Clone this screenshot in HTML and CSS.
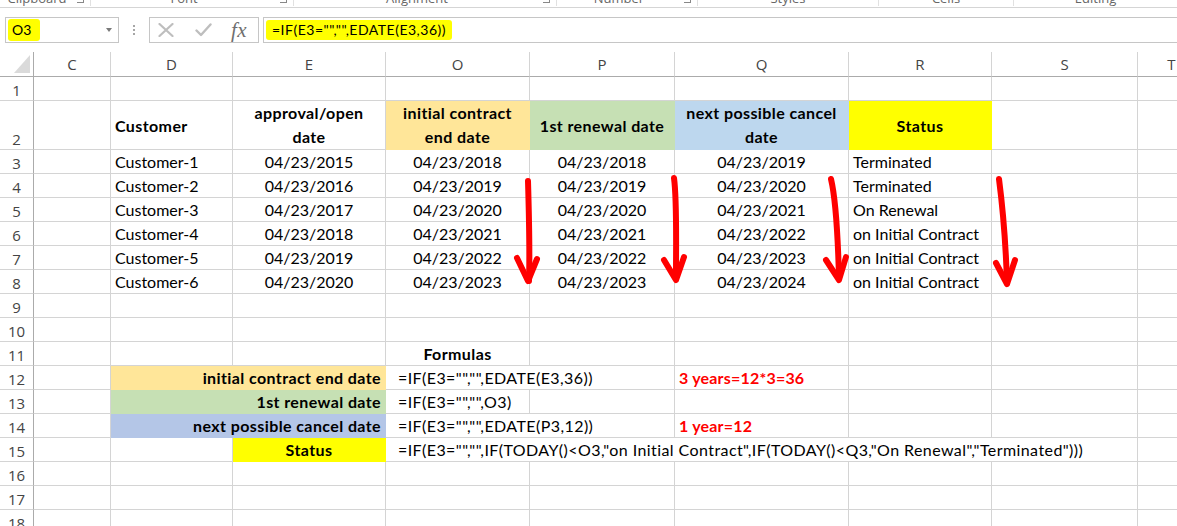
FILE: index.html
```html
<!DOCTYPE html>
<html>
<head>
<meta charset="utf-8">
<title>Excel sheet</title>
<link rel="stylesheet" href="styles.css">
</head>
<body>
<div class="app">
  <div class="ribbon">
    <div class="grp g1"><span class="lbl">Clipboard</span><span class="launch"></span></div>
    <div class="grp g2"><span class="lbl">Font</span><span class="launch"></span></div>
    <div class="grp g3"><span class="lbl">Alignment</span><span class="launch"></span></div>
    <div class="grp g4"><span class="lbl">Number</span><span class="launch"></span></div>
    <div class="grp g5 nol"><span class="lbl">Styles</span></div>
    <div class="grp g6 nol"><span class="lbl">Cells</span></div>
    <div class="grp g7 nol"><span class="lbl">Editing</span></div>
  </div>

  <div class="fbar">
    <div class="namebox"><span class="hl hl-name">O3</span><span class="caret"></span></div>
    <div class="dots"><i></i><i></i><i></i></div>
    <div class="fxbox">
      <svg class="ic-x" width="16" height="14" viewBox="0 0 16 14"><path d="M1.5 1 L14.5 13 M14.5 1 L1.5 13" stroke="#BEBEBE" stroke-width="2.2" fill="none" stroke-linecap="round"/></svg>
      <svg class="ic-ck" width="17" height="14" viewBox="0 0 17 14"><path d="M1.5 7.5 L6 12 L15.5 1.5" stroke="#BEBEBE" stroke-width="2.4" fill="none" stroke-linecap="round" stroke-linejoin="round"/></svg>
      <span class="fx">fx</span>
    </div>
    <div class="formula"><span class="hl hl-formula">=IF(E3="","",EDATE(E3,36))</span></div>
  </div>

  <div class="sheet">
    <!-- header -->
    <div class="c corner"><span class="tri"></span></div>
    <div class="c ch">C</div><div class="c ch">D</div><div class="c ch">E</div><div class="c ch">O</div><div class="c ch">P</div><div class="c ch">Q</div><div class="c ch">R</div><div class="c ch">S</div><div class="c ch">T</div>

    <!-- row 1 -->
    <div class="c rh">1</div>
    <div class="c"></div><div class="c"></div><div class="c"></div><div class="c"></div><div class="c"></div><div class="c"></div><div class="c"></div><div class="c"></div><div class="c"></div>

    <!-- row 2 -->
    <div class="c rh">2</div>
    <div class="c"></div>
    <div class="c b">Customer</div>
    <div class="c b ctr wrap">approval/open<br>date</div>
    <div class="c b ctr wrap f-or">initial contract<br>end date</div>
    <div class="c b ctr f-gr">1st renewal date</div>
    <div class="c b ctr wrap f-bl">next possible cancel<br>date</div>
    <div class="c b ctr f-ye">Status</div>
    <div class="c"></div><div class="c"></div>

    <!-- row 3 -->
    <div class="c rh">3</div>
    <div class="c"></div>
    <div class="c">Customer-1</div>
    <div class="c ctr">04/23/2015</div>
    <div class="c ctr">04/23/2018</div>
    <div class="c ctr">04/23/2018</div>
    <div class="c ctr">04/23/2019</div>
    <div class="c">Terminated</div>
    <div class="c"></div><div class="c"></div>

    <!-- row 4 -->
    <div class="c rh">4</div>
    <div class="c"></div>
    <div class="c">Customer-2</div>
    <div class="c ctr">04/23/2016</div>
    <div class="c ctr">04/23/2019</div>
    <div class="c ctr">04/23/2019</div>
    <div class="c ctr">04/23/2020</div>
    <div class="c">Terminated</div>
    <div class="c"></div><div class="c"></div>

    <!-- row 5 -->
    <div class="c rh">5</div>
    <div class="c"></div>
    <div class="c">Customer-3</div>
    <div class="c ctr">04/23/2017</div>
    <div class="c ctr">04/23/2020</div>
    <div class="c ctr">04/23/2020</div>
    <div class="c ctr">04/23/2021</div>
    <div class="c">On Renewal</div>
    <div class="c"></div><div class="c"></div>

    <!-- row 6 -->
    <div class="c rh">6</div>
    <div class="c"></div>
    <div class="c">Customer-4</div>
    <div class="c ctr">04/23/2018</div>
    <div class="c ctr">04/23/2021</div>
    <div class="c ctr">04/23/2021</div>
    <div class="c ctr">04/23/2022</div>
    <div class="c">on Initial Contract</div>
    <div class="c"></div><div class="c"></div>

    <!-- row 7 -->
    <div class="c rh">7</div>
    <div class="c"></div>
    <div class="c">Customer-5</div>
    <div class="c ctr">04/23/2019</div>
    <div class="c ctr">04/23/2022</div>
    <div class="c ctr">04/23/2022</div>
    <div class="c ctr">04/23/2023</div>
    <div class="c">on Initial Contract</div>
    <div class="c"></div><div class="c"></div>

    <!-- row 8 -->
    <div class="c rh">8</div>
    <div class="c"></div>
    <div class="c">Customer-6</div>
    <div class="c ctr">04/23/2020</div>
    <div class="c ctr">04/23/2023</div>
    <div class="c ctr">04/23/2023</div>
    <div class="c ctr">04/23/2024</div>
    <div class="c">on Initial Contract</div>
    <div class="c"></div><div class="c"></div>

    <!-- row 9 -->
    <div class="c rh">9</div>
    <div class="c"></div><div class="c"></div><div class="c"></div><div class="c"></div><div class="c"></div><div class="c"></div><div class="c"></div><div class="c"></div><div class="c"></div>

    <!-- row 10 -->
    <div class="c rh">10</div>
    <div class="c"></div><div class="c"></div><div class="c"></div><div class="c"></div><div class="c"></div><div class="c"></div><div class="c"></div><div class="c"></div><div class="c"></div>

    <!-- row 11 -->
    <div class="c rh">11</div>
    <div class="c"></div><div class="c"></div><div class="c"></div>
    <div class="c b ctr">Formulas</div>
    <div class="c"></div><div class="c"></div><div class="c"></div><div class="c"></div><div class="c"></div>

    <!-- row 12 -->
    <div class="c rh">12</div>
    <div class="c"></div>
    <div class="c b rt s2 f-or">initial contract end date</div>
    <div class="c fm s2">=IF(E3="","",EDATE(E3,36))</div>
    <div class="c red">3 years=12*3=36</div>
    <div class="c"></div><div class="c"></div><div class="c"></div>

    <!-- row 13 -->
    <div class="c rh">13</div>
    <div class="c"></div>
    <div class="c b rt s2 f-gr">1st renewal date</div>
    <div class="c fm">=IF(E3="","",O3)</div>
    <div class="c"></div><div class="c"></div><div class="c"></div><div class="c"></div><div class="c"></div>

    <!-- row 14 -->
    <div class="c rh">14</div>
    <div class="c"></div>
    <div class="c b rt s2 f-bl2">next possible cancel date</div>
    <div class="c fm s2">=IF(E3="","",EDATE(P3,12))</div>
    <div class="c red">1 year=12</div>
    <div class="c"></div><div class="c"></div><div class="c"></div>

    <!-- row 15 -->
    <div class="c rh">15</div>
    <div class="c"></div><div class="c"></div>
    <div class="c b ctr f-ye">Status</div>
    <div class="c fm s5">=IF(E3="","",IF(TODAY()&lt;O3,"on Initial Contract",IF(TODAY()&lt;Q3,"On Renewal","Terminated")))</div>
    <div class="c"></div>

    <!-- row 16 -->
    <div class="c rh">16</div>
    <div class="c"></div><div class="c"></div><div class="c"></div><div class="c"></div><div class="c"></div><div class="c"></div><div class="c"></div><div class="c"></div><div class="c"></div>

    <!-- row 17 -->
    <div class="c rh">17</div>
    <div class="c"></div><div class="c"></div><div class="c"></div><div class="c"></div><div class="c"></div><div class="c"></div><div class="c"></div><div class="c"></div><div class="c"></div>

    <!-- row 18 -->
    <div class="c rh">18</div>
    <div class="c"></div><div class="c"></div><div class="c"></div><div class="c"></div><div class="c"></div><div class="c"></div><div class="c"></div><div class="c"></div><div class="c"></div>
  </div>

  <svg class="arrows" width="1177" height="526" viewBox="0 0 1177 526">
    <g stroke="#FF0000" stroke-width="6" fill="none" stroke-linecap="round" stroke-linejoin="round">
      <path d="M528 181 C529 215 530 250 529 281"/>
      <path d="M517 258 L528 281 L537 259"/>
      <path d="M674 178 C677 200 676 240 676 278"/>
      <path d="M664 260 L676 280 L684 257"/>
      <path d="M831 179 C836 200 838 240 839 278"/>
      <path d="M826 260 L839 280 L846 257"/>
      <path d="M999 179 C1003 210 1006 250 1007 283"/>
      <path d="M996 263 L1007 284 L1015 260"/>
    </g>
  </svg>
</div>
</body>
</html>
```

FILE: styles.css
```css
* { box-sizing: border-box; }
html, body { margin: 0; padding: 0; }
body {
  width: 1177px;
  height: 526px;
  overflow: hidden;
  background: #fff;
  font-family: Lato, "Liberation Sans", sans-serif;
}
.app {
  position: relative;
  width: 1177px;
  height: 526px;
  overflow: hidden;
}

/* ribbon group labels (cut off at top) */
.ribbon {
  display: flex;
  height: 8px;
  border-bottom: 1px solid #D5D5D5;
  overflow: hidden;
}
.grp {
  position: relative;
  display: flex;
  justify-content: center;
  height: 6px;
  padding-right: 16px;
  border-right: 1px solid #E1E1E1;
}
.grp.nol { padding-right: 0; }
.g1 { width: 91px; }
.g2 { width: 203px; }
.g3 { width: 263px; }
.g4 { width: 141px; }
.g5 { width: 181px; }
.g6 { width: 135px; }
.g7 { flex: 1; border-right: 0; }
.lbl {
  font-family: "Open Sans", sans-serif;
  font-size: 13px;
  line-height: 13px;
  color: #666;
  margin-top: -8px;
  white-space: nowrap;
}
.launch {
  position: absolute;
  right: 6px;
  top: -4px;
  width: 7px;
  height: 7px;
  border-right: 1px solid #888;
  border-bottom: 1px solid #888;
}

/* formula bar */
.fbar {
  display: flex;
  height: 26px;
  margin-top: 9px;
}
.namebox {
  position: relative;
  margin-left: 5px;
  width: 114px;
  border: 1px solid #C6C6C6;
  display: flex;
  align-items: center;
  padding-left: 2px;
  font-size: 14px;
  color: #000;
}
.hl {
  background: #FFFF00;
  border-radius: 3px;
  line-height: 16px;
}
.hl-name { padding: 3px 9px 3px 4px; }
.caret {
  position: absolute;
  right: 6px;
  top: 10px;
  width: 0;
  height: 0;
  border-left: 3.5px solid transparent;
  border-right: 3.5px solid transparent;
  border-top: 4px solid #7A7A7A;
}
.dots {
  width: 30px;
  display: flex;
  flex-direction: column;
  align-items: center;
  justify-content: center;
  gap: 2px;
}
.dots i {
  display: block;
  width: 2px;
  height: 2px;
  background: #A6A6A6;
}
.fxbox {
  width: 110px;
  border: 1px solid #C6C6C6;
  display: flex;
  align-items: center;
}
.ic-x { margin-left: 8px; }
.ic-ck { margin-left: 21px; }
.fx {
  margin-left: 19px;
  font-family: "Liberation Serif", serif;
  font-style: italic;
  font-size: 21px;
  line-height: 20px;
  color: #6F6F6F;
  letter-spacing: 0.5px;
}
.formula {
  flex: 1;
  margin-left: 4px;
  border: 1px solid #C6C6C6;
  border-right: 0;
  display: flex;
  align-items: center;
  padding-left: 2px;
  font-size: 14px;
  color: #000;
}
.hl-formula { padding: 2px 6px 2px 6px; letter-spacing: 0.5px; }

/* sheet grid */
.sheet {
  display: grid;
  grid-template-columns: 34px 77px 122px 153px 144px 145px 174px 143px 146px 68px;
  grid-template-rows: 25px 24px 49px repeat(16, 24px);
  margin-top: 9px;
  width: max-content;
}
.c {
  display: flex;
  align-items: center;
  padding: 0 4px;
  border-right: 1px solid #D4D4D4;
  border-bottom: 1px solid #D4D4D4;
  white-space: nowrap;
  overflow: hidden;
  font-size: 16px;
  color: #000;
}
.ch {
  justify-content: center;
  font-family: "Open Sans", sans-serif;
  font-size: 15px;
  line-height: 20px;
  color: #444;
  border-bottom-color: #ABABAB;
}
.corner {
  position: relative;
  border-right-color: #ABABAB;
  border-bottom-color: #ABABAB;
}
.tri {
  position: absolute;
  right: 3px;
  bottom: 3px;
  width: 0;
  height: 0;
  border-left: 16px solid transparent;
  border-bottom: 18px solid #DADADA;
}
.rh {
  justify-content: center;
  align-items: flex-end;
  font-family: "Open Sans", sans-serif;
  font-size: 15px;
  line-height: 20px;
  color: #444;
  border-right-color: #ABABAB;
  padding: 0;
}
.b { font-weight: 700; letter-spacing: 0.4px; }
.ctr { justify-content: center; text-align: center; }
.rt { justify-content: flex-end; text-align: right; }
.wrap { line-height: 24px; }
.s2 { grid-column: span 2; }
.s5 { grid-column: span 5; }
.fm { padding-left: 12px; letter-spacing: 0.42px; }
.red { color: #FF0000; font-weight: 700; letter-spacing: 0.2px; }

.f-or { background: #FFE699; border-color: transparent; }
.f-gr { background: #C6E0B4; border-color: transparent; }
.f-bl { background: #BDD7EE; border-color: transparent; }
.f-bl2 { background: #B4C6E7; border-color: transparent; }
.f-ye { background: #FFFF00; border-color: transparent; }

.arrows {
  position: absolute;
  left: 0;
  top: 0;
  width: 1177px;
  height: 526px;
  pointer-events: none;
}
```
